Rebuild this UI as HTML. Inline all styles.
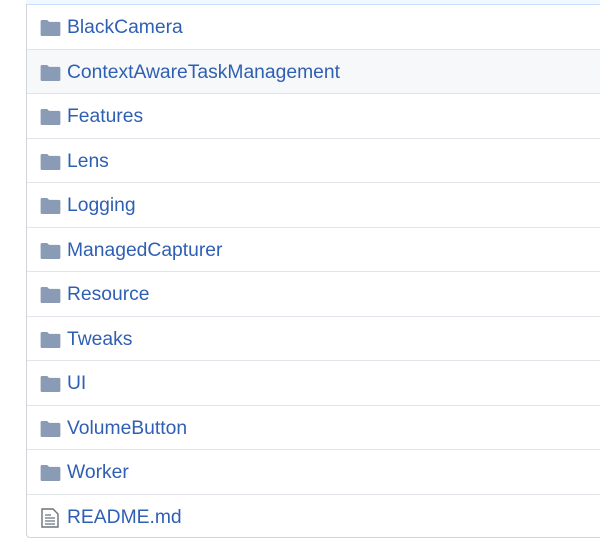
<!DOCTYPE html>
<html><head><style>
body{margin:0;width:600px;height:540px;background:#fff;position:relative;overflow:hidden;font-family:"Liberation Sans",Helvetica,sans-serif}
.top{position:absolute;left:26px;top:0;width:600px;height:4px;background:#f1f8ff;border-bottom:1px solid #c8e1ff}
.box{position:absolute;left:26px;top:4px;width:600px;height:533px;border-left:1px solid #d1d5da;border-bottom:1px solid #d1d5da;border-radius:0 0 0 4px}
.row{position:absolute;left:27px;width:580px;height:44.5px;border-top:1px solid #e1e4e8;box-sizing:border-box}
.row span{position:absolute;left:40px;top:12px;font-size:19.3px;color:#2f5fb3}
.row svg{position:absolute;left:13px;top:15px}
</style></head><body>
<div class="top"></div>
<div class="box"></div>
<div style="position:absolute;left:0;top:0">
<div class="row" style="top:4px;border-top:1px solid #c8e1ff"><svg width="21" height="16" viewBox="0 0 21 17"><path d="M0 1.5Q0 0 1.5 0H7l2 2h10.5Q21 2 21 3.5V15.5Q21 17 19.5 17H1.5Q0 17 0 15.5Z" fill="#8a9bb5"/></svg><span>BlackCamera</span></div>
<div class="row" style="top:48.5px;background:#f6f8fa"><svg width="21" height="16" viewBox="0 0 21 17"><path d="M0 1.5Q0 0 1.5 0H7l2 2h10.5Q21 2 21 3.5V15.5Q21 17 19.5 17H1.5Q0 17 0 15.5Z" fill="#8a9bb5"/></svg><span>ContextAwareTaskManagement</span></div>
<div class="row" style="top:93px"><svg width="21" height="16" viewBox="0 0 21 17"><path d="M0 1.5Q0 0 1.5 0H7l2 2h10.5Q21 2 21 3.5V15.5Q21 17 19.5 17H1.5Q0 17 0 15.5Z" fill="#8a9bb5"/></svg><span>Features</span></div>
<div class="row" style="top:137.5px"><svg width="21" height="16" viewBox="0 0 21 17"><path d="M0 1.5Q0 0 1.5 0H7l2 2h10.5Q21 2 21 3.5V15.5Q21 17 19.5 17H1.5Q0 17 0 15.5Z" fill="#8a9bb5"/></svg><span>Lens</span></div>
<div class="row" style="top:182px"><svg width="21" height="16" viewBox="0 0 21 17"><path d="M0 1.5Q0 0 1.5 0H7l2 2h10.5Q21 2 21 3.5V15.5Q21 17 19.5 17H1.5Q0 17 0 15.5Z" fill="#8a9bb5"/></svg><span>Logging</span></div>
<div class="row" style="top:226.5px"><svg width="21" height="16" viewBox="0 0 21 17"><path d="M0 1.5Q0 0 1.5 0H7l2 2h10.5Q21 2 21 3.5V15.5Q21 17 19.5 17H1.5Q0 17 0 15.5Z" fill="#8a9bb5"/></svg><span>ManagedCapturer</span></div>
<div class="row" style="top:271px"><svg width="21" height="16" viewBox="0 0 21 17"><path d="M0 1.5Q0 0 1.5 0H7l2 2h10.5Q21 2 21 3.5V15.5Q21 17 19.5 17H1.5Q0 17 0 15.5Z" fill="#8a9bb5"/></svg><span>Resource</span></div>
<div class="row" style="top:315.5px"><svg width="21" height="16" viewBox="0 0 21 17"><path d="M0 1.5Q0 0 1.5 0H7l2 2h10.5Q21 2 21 3.5V15.5Q21 17 19.5 17H1.5Q0 17 0 15.5Z" fill="#8a9bb5"/></svg><span>Tweaks</span></div>
<div class="row" style="top:360px"><svg width="21" height="16" viewBox="0 0 21 17"><path d="M0 1.5Q0 0 1.5 0H7l2 2h10.5Q21 2 21 3.5V15.5Q21 17 19.5 17H1.5Q0 17 0 15.5Z" fill="#8a9bb5"/></svg><span>UI</span></div>
<div class="row" style="top:404.5px"><svg width="21" height="16" viewBox="0 0 21 17"><path d="M0 1.5Q0 0 1.5 0H7l2 2h10.5Q21 2 21 3.5V15.5Q21 17 19.5 17H1.5Q0 17 0 15.5Z" fill="#8a9bb5"/></svg><span>VolumeButton</span></div>
<div class="row" style="top:449px"><svg width="21" height="16" viewBox="0 0 21 17"><path d="M0 1.5Q0 0 1.5 0H7l2 2h10.5Q21 2 21 3.5V15.5Q21 17 19.5 17H1.5Q0 17 0 15.5Z" fill="#8a9bb5"/></svg><span>Worker</span></div>
<div class="row" style="top:493.5px"><svg width="18" height="20" viewBox="0 0 18 20" style="left:14px;top:13px"><path d="M1 1H12L17 6V19H1Z" fill="none" stroke="#6a737d" stroke-width="1.4"/><path d="M4 7H10M4 10H14M4 13H14M4 16H14" stroke="#6a737d" stroke-width="1.3"/></svg><span>README.md</span></div>
</div>
</body></html>
